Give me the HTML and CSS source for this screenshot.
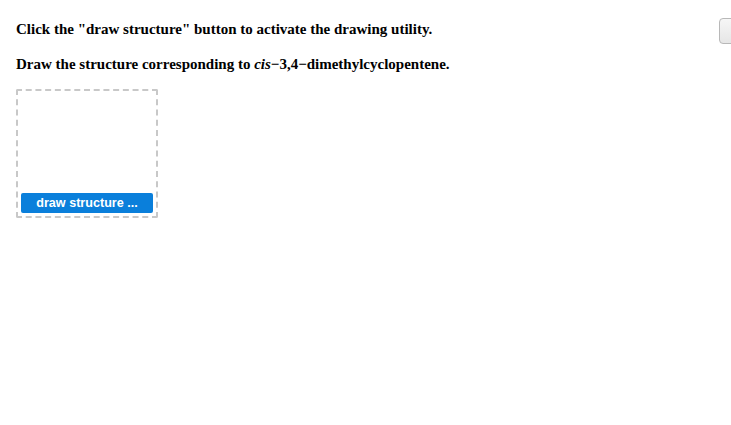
FILE: index.html
```html
<!DOCTYPE html>
<html>
<head>
<meta charset="utf-8">
<link rel="stylesheet" href="styles.css">
</head>
<body>
<div class="page">
  <p class="line first">Click the "draw structure" button to activate the drawing utility.</p>
  <p class="line second">Draw the structure corresponding to <i>cis</i>&minus;3,4&minus;dimethylcyclopentene.</p>
  <div class="canvas">
    <button class="draw-btn">draw structure ...</button>
  </div>
</div>
<div class="side-tab"></div>
</body>
</html>
```

FILE: styles.css
```css
html, body {
  margin: 0;
  padding: 0;
  background: #fff;
}
body {
  width: 731px;
  height: 425px;
  overflow: hidden;
  position: relative;
}
.page {
  padding: 20px 0 0 16px;
  font-family: "Liberation Serif", "Times New Roman", serif;
  font-weight: bold;
  font-size: 15px;
  color: #000;
}
.line {
  margin: 0;
  line-height: 18px;
}
.second {
  margin-top: 17px;
}
.canvas {
  margin-top: 16px;
  width: 138px;
  height: 122px;
  border: 2px dashed #c8c8c8;
  border-radius: 2px;
  display: flex;
  flex-direction: column;
  justify-content: flex-end;
  align-items: center;
  padding-bottom: 3px;
}
.draw-btn {
  width: 132px;
  height: 20px;
  border: none;
  border-radius: 2px;
  background: #0a7fdb;
  color: #fff;
  font-family: "Liberation Sans", Arial, sans-serif;
  font-weight: bold;
  font-size: 12.6px;
  padding: 0;
  line-height: 20px;
}
.side-tab {
  position: absolute;
  left: 719px;
  top: 18px;
  width: 20px;
  height: 24px;
  border: 1px solid #b8b8b8;
  border-radius: 4px;
  background: linear-gradient(#f6f6f6, #e6e6e6);
}
```
